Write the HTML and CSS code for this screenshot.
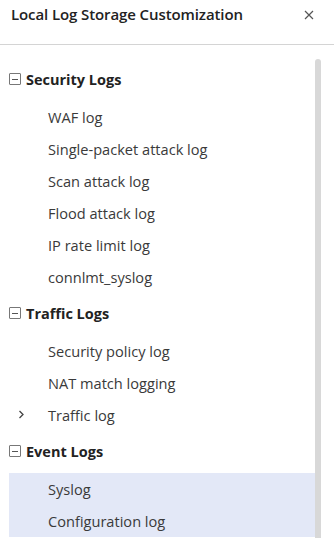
FILE: index.html
```html
<!DOCTYPE html>
<html lang="en">
<head>
  <meta charset="UTF-8">
  <title>Local Log Storage Customization</title>
  <link rel="stylesheet" href="styles.css">
</head>
<body>
  <div class="drawer">
    <div class="drawer-header">
      <span class="title">Local Log Storage Customization</span>
      <span class="close">
        <svg width="10" height="10" viewBox="0 0 10 10"><path d="M1 1L9 9M9 1L1 9" stroke="#555" stroke-width="1.2"/></svg>
      </span>
    </div>

    <div class="drawer-body">
      <div class="tree">
        <div class="group">
          <div class="group-title"><span class="toggle"></span>Security Logs</div>
          <div class="item">WAF log</div>
          <div class="item">Single-packet attack log</div>
          <div class="item">Scan attack log</div>
          <div class="item">Flood attack log</div>
          <div class="item">IP rate limit log</div>
          <div class="item">connlmt_syslog</div>
        </div>

        <div class="group">
          <div class="group-title"><span class="toggle"></span>Traffic Logs</div>
          <div class="item">Security policy log</div>
          <div class="item">NAT match logging</div>
          <div class="item">
            <span class="arrow">
              <svg width="7" height="9" viewBox="0 0 7 9"><path d="M1.5 1L5 4.5L1.5 8" fill="none" stroke="#444" stroke-width="1.3"/></svg>
            </span>Traffic log
          </div>
        </div>

        <div class="group">
          <div class="group-title"><span class="toggle"></span>Event Logs</div>
          <div class="item selected">Syslog</div>
          <div class="item selected">Configuration log</div>
        </div>
      </div>
      <div class="scrollbar"></div>
    </div>
  </div>
</body>
</html>
```

FILE: styles.css
```css
body {
  margin: 0;
  font-family: 'Open Sans', 'Noto Sans', sans-serif;
  background: #fff;
  color: #333;
}

.drawer {
  width: 334px;
  height: 538px;
  overflow: hidden;
}

.drawer-header {
  height: 44px;
  border-bottom: 1px solid #d4d4d4;
  display: flex;
  justify-content: space-between;
  padding: 0 20px 0 11px;
}

.title {
  font-size: 15px;
  font-weight: 600;
  color: #222;
  line-height: 29px;
  letter-spacing: -0.1px;
}

.close {
  display: flex;
  align-items: center;
  height: 29px;
}

.drawer-body {
  display: flex;
  padding: 16px 0 0 9px;
}

.tree {
  flex: 1;
}

.scrollbar {
  width: 6px;
  height: 490px;
  margin: -2px 13px 0 0;
  background: #d8d8d8;
  border-radius: 3px 3px 0 0;
}

.group-title {
  height: 36px;
  display: flex;
  align-items: center;
  font-size: 14.5px;
  font-weight: 700;
  color: #222;
  margin-bottom: 4px;
}

.group {
  margin-bottom: 2px;
}

.toggle {
  width: 10px;
  height: 10px;
  border: 1px solid #777;
  border-radius: 1px;
  margin-right: 5px;
  position: relative;
}

.toggle::after {
  content: "";
  position: absolute;
  left: 2px;
  right: 2px;
  top: 4.5px;
  height: 1px;
  background: #555;
}

.item {
  height: 32px;
  display: flex;
  align-items: center;
  padding-left: 39px;
  font-size: 14.6px;
  color: #3a3a3a;
  position: relative;
}

.item.selected {
  background: #e3e8f7;
}

.arrow {
  position: absolute;
  left: 9px;
  top: 11px;
  display: flex;
}
```
